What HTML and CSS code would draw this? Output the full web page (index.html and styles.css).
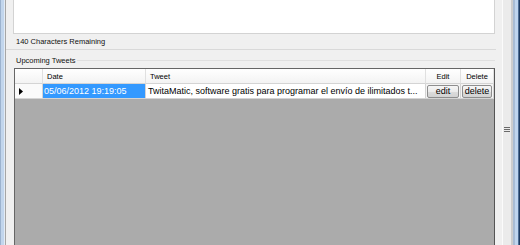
FILE: index.html
```html
<!DOCTYPE html>
<html>
<head>
<meta charset="utf-8">
<link rel="stylesheet" href="styles.css">
</head>
<body>
<div class="window">
  <div class="frame-left"></div>
  <div class="content">
    <div class="textbox"></div>
    <div class="status">140 Characters Remaining</div>
    <div class="section-title"><span>Upcoming Tweets</span><i class="rule"></i></div>
    <div class="grid">
      <div class="row head">
        <div class="cell rh"></div>
        <div class="cell">Date</div>
        <div class="cell">Tweet</div>
        <div class="cell center">Edit</div>
        <div class="cell center">Delete</div>
      </div>
      <div class="row data">
        <div class="cell rh"><svg width="5" height="7" viewBox="0 0 5 7"><path d="M0 0 L4 3.5 L0 7 Z" fill="#000"/></svg></div>
        <div class="cell selected">05/06/2012 19:19:05</div>
        <div class="cell">TwitaMatic, software gratis para programar el envío de ilimitados t...</div>
        <div class="cell btncell"><span class="btn">edit</span></div>
        <div class="cell btncell"><span class="btn">delete</span></div>
      </div>
    </div>
  </div>
  <div class="scrollbar">
    <svg class="grip" width="8" height="8" viewBox="0 0 8 8"><path d="M1 1.5H7M1 3.5H7M1 5.5H7" stroke="#6a6a6a" stroke-width="1"/></svg>
  </div>
  <div class="frame-right"></div>
</div>
</body>
</html>
```
FILE: styles.css
```css
html, body {
  margin: 0;
  padding: 0;
  width: 520px;
  height: 245px;
  overflow: hidden;
  font-family: "Liberation Sans", Arial, sans-serif;
}
.window {
  display: flex;
  width: 520px;
  height: 245px;
}
.frame-left {
  width: 6px;
  flex: none;
  background: linear-gradient(to right, #9cb3cf 0 1px, #c2d6ed 1px 4px, #e4ecf5 4px 5px, #a6a6a6 5px 6px);
}
.content {
  flex: 1;
  background: #f0f0f0;
  padding: 0 7px 0 8px;
  display: flex;
  flex-direction: column;
  min-width: 0;
}
.textbox {
  height: 33px;
  flex: none;
  background: #fff;
  border: 1px solid #d3d3d3;
  border-top: none;
  margin-left: -1px;
}
.status {
  height: 15px;
  line-height: 15px;
  font-size: 7.5px;
  padding-left: 2px;
  color: #111;
  border-bottom: 1px solid #d9d9d9;
  margin: 0 -1px 0 -8px;
  padding-left: 10px;
  flex: none;
}
.section-title {
  height: 18px;
  flex: none;
  display: flex;
  align-items: center;
  padding-top: 2px;
  box-sizing: border-box;
  font-size: 7.5px;
  color: #111;
  padding-left: 2px;
}
.section-title .rule {
  flex: 1;
  height: 1px;
  background: #e0e0e0;
  margin-left: 2px;
}
.grid {
  flex: 1;
  background: #ababab;
  border: 1px solid #666;
  border-bottom: none;
  border-right-color: #555;
  display: flex;
  flex-direction: column;
}
.row {
  display: grid;
  grid-template-columns: 28px 103px 280px 35px 33px;
  height: 15px;
}
.cell {
  box-sizing: border-box;
  border-right: 1px solid #d4d4d4;
  border-bottom: 1px solid #d4d4d4;
  background: #fff;
  white-space: nowrap;
  overflow: hidden;
  display: flex;
  align-items: center;
}
.head .cell {
  font-size: 7.5px;
  padding-left: 4px;
  background: linear-gradient(#ffffff, #f3f3f3);
  border-right-color: #e0e0e0;
}
.head .cell.center, .cell.center {
  justify-content: center;
  padding-left: 0;
}
.data .cell {
  font-size: 9px;
  padding-left: 2px;
}
.cell.rh {
  padding-left: 4px;
}
.data .cell.rh {
  padding-left: 4px;
  background: #fafafa;
}
.data .cell.selected {
  background: #3399ff;
  color: #fff;
  padding-left: 1px;
}
.data .cell.btncell {
  padding: 0 1px;
  justify-content: center;
  background: #f4f4f4;
}
.btn {
  display: flex;
  align-items: center;
  justify-content: center;
  width: 100%;
  height: 13px;
  box-sizing: border-box;
  border: 1px solid #8e8e8e;
  border-radius: 2px;
  background: linear-gradient(#f6f6f6 0%, #ebebeb 50%, #dcdcdc 51%, #d2d2d2 100%);
  font-size: 9px;
  color: #000;
}
.scrollbar {
  width: 11px;
  flex: none;
  background: linear-gradient(to right, #fbfbfb 0 1px, #ebebeb 1px 9px, #cdcdcd 9px 11px);
  display: flex;
  flex-direction: column;
}
.grip {
  margin-top: 126px;
  margin-left: 1px;
  display: block;
}
.frame-right {
  width: 7px;
  flex: none;
  background: linear-gradient(to right, #a8bcd4 0 2px, #bfd5ee 2px 5px, #4f6f96 5px 6px, #1f3b60 6px 7px);
}
```
